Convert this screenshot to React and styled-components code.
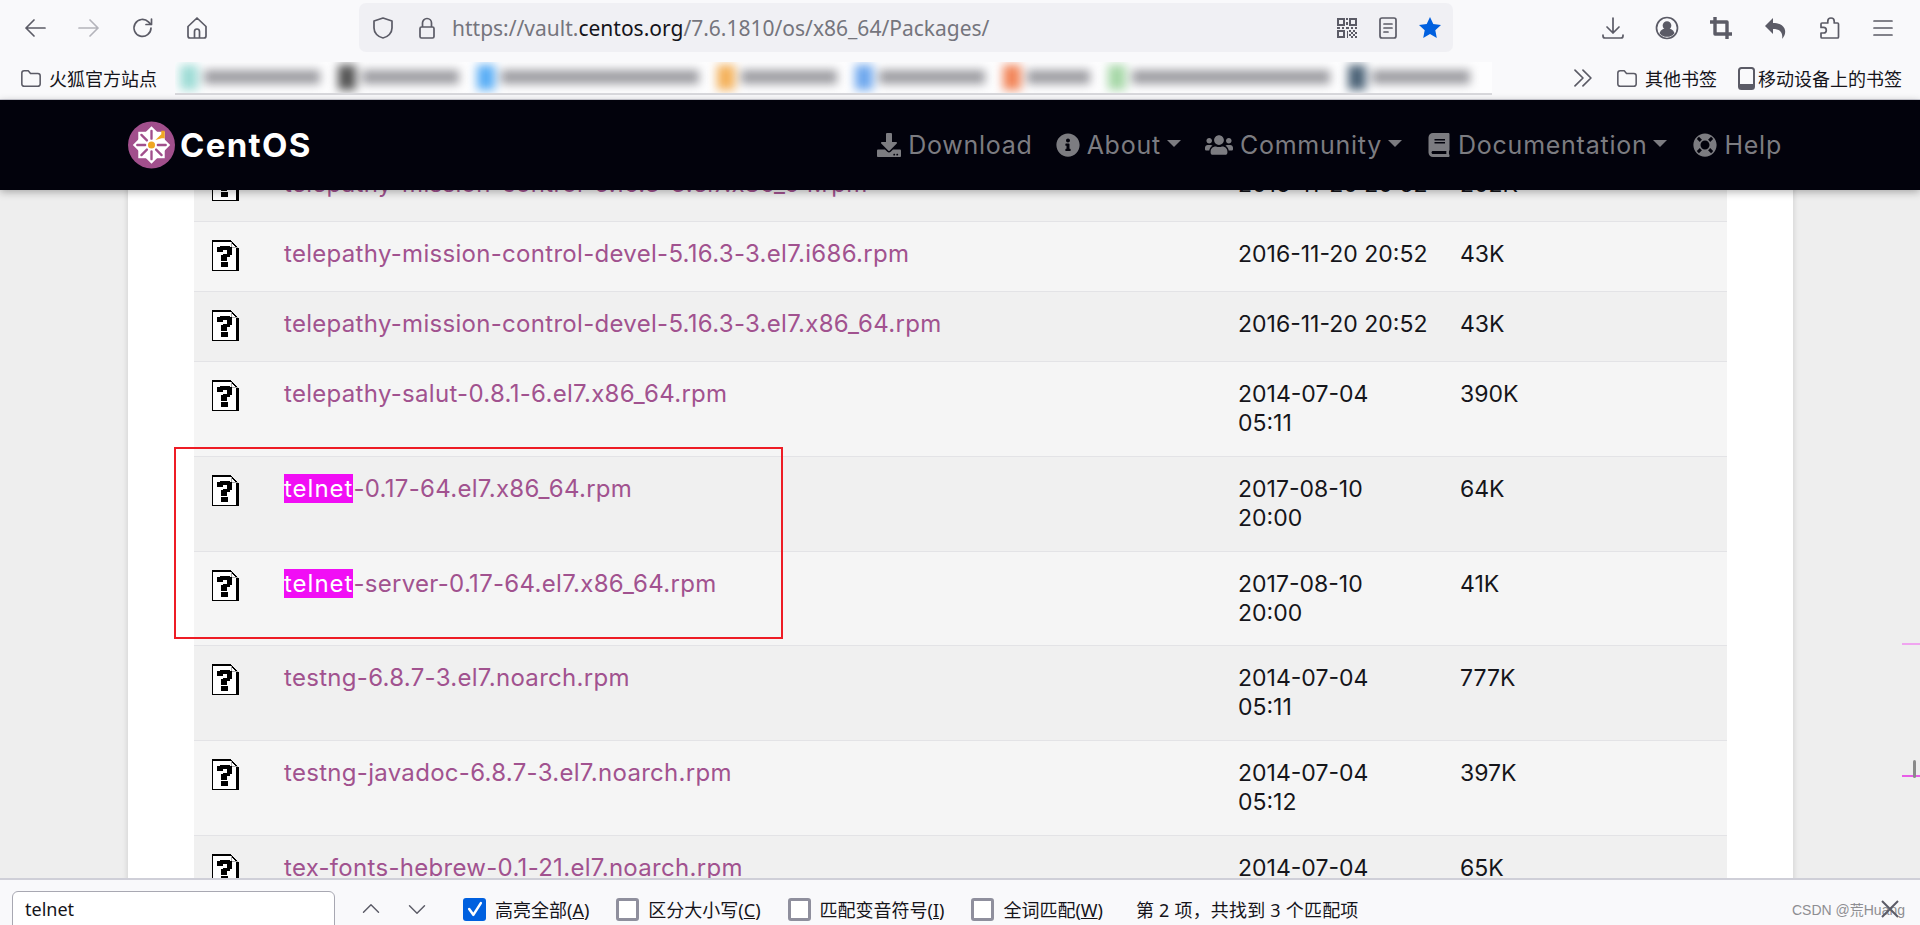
import React from 'react';
import styled, { createGlobalStyle } from 'styled-components';
import { FaDownload, FaInfoCircle, FaUsers, FaBook, FaLifeRing } from 'react-icons/fa';

const GlobalStyle = createGlobalStyle`
	html, body {
		margin: 0;
		padding: 0;
		height: 100%;
		overflow: hidden;
	}
	* {
		box-sizing: border-box;
	}
`;

const UI_FONT = `'Noto Sans', 'Noto Sans CJK SC', sans-serif`;
const SITE_FONT = `Inter, 'Noto Sans', sans-serif`;

const rows = [
	{ name: 'telepathy-mission-control-5.16.3-3.el7.x86_64.rpm', date: '2016-11-20 20:52', size: '202K' },
	{ name: 'telepathy-mission-control-devel-5.16.3-3.el7.i686.rpm', date: '2016-11-20 20:52', size: '43K' },
	{ name: 'telepathy-mission-control-devel-5.16.3-3.el7.x86_64.rpm', date: '2016-11-20 20:52', size: '43K' },
	{ name: 'telepathy-salut-0.8.1-6.el7.x86_64.rpm', date: '2014-07-04\n05:11', size: '390K' },
	{ name: '-0.17-64.el7.x86_64.rpm', mark: 'telnet', date: '2017-08-10\n20:00', size: '64K' },
	{ name: '-server-0.17-64.el7.x86_64.rpm', mark: 'telnet', date: '2017-08-10\n20:00', size: '41K' },
	{ name: 'testng-6.8.7-3.el7.noarch.rpm', date: '2014-07-04\n05:11', size: '777K' },
	{ name: 'testng-javadoc-6.8.7-3.el7.noarch.rpm', date: '2014-07-04\n05:12', size: '397K' },
	{ name: 'tex-fonts-hebrew-0.1-21.el7.noarch.rpm', date: '2014-07-04\n05:11', size: '65K' },
];

const blurred = [
	{ color: '#9fdcd6', width: 116 },
	{ color: '#555', width: 97 },
	{ color: '#5aaef5', width: 198 },
	{ color: '#f4b25c', width: 96 },
	{ color: '#6fa8ee', width: 106 },
	{ color: '#f2865a', width: 63 },
	{ color: '#a7d8a8', width: 198 },
	{ color: '#4d6478', width: 98 },
];

const Page = styled.div`
	height: 100vh;
	display: flex;
	flex-direction: column;
	overflow: hidden;
	background: #eeeeee;
`;

const Toolbar = styled.div`
	height: 55px;
	flex: none;
	display: flex;
	align-items: flex-start;
	padding: 3px 25px 0 23px;
	background: #f9f9fb;
`;

const IconGroup = styled.div`
	height: 49px;
	display: flex;
	align-items: center;
	gap: 30px;
	margin-left: ${({ $auto }) => ($auto ? 'auto' : '0')};
`;

const UrlBar = styled.div`
	width: 1094px;
	height: 49px;
	margin-left: 150px;
	padding: 0 11px 0 12px;
	display: flex;
	align-items: center;
	border-radius: 7px;
	background: #f0f0f4;
`;

const UrlText = styled.div`
	flex: 1;
	margin-left: 13px;
	font: 21px ${UI_FONT};
	color: #75757d;
	white-space: nowrap;
	b {
		font-weight: 400;
		color: #15141a;
	}
`;

const UrlActions = styled.div`
	display: flex;
	align-items: center;
	gap: 18px;
`;

const BookmarkBar = styled.div`
	height: 45px;
	flex: none;
	display: flex;
	align-items: center;
	padding: 2px 18px 0 20px;
	background: #f9f9fb;
	border-bottom: 1px solid #cfcfd8;
`;

const Bookmark = styled.div`
	display: flex;
	align-items: center;
	gap: ${({ $gap }) => $gap || 7}px;
	margin-left: ${({ $left }) => $left || 0}px;
	font: 18px ${UI_FONT};
	color: #15141a;
	white-space: nowrap;
`;

const BlurStrip = styled.div`
	width: 1322px;
	height: 33px;
	margin-left: 18px;
	margin-right: 79px;
	padding: 0 0 0 5px;
	display: flex;
	align-items: center;
	gap: 18px;
	background: #fdfdfe;
	border-bottom: 2px solid #d8d8dc;
	overflow: hidden;
`;

const BlurItem = styled.div`
	flex: none;
	display: flex;
	align-items: center;
	gap: 6px;
	filter: blur(5px);
`;

const BlurIcon = styled.span`
	width: 18px;
	height: 25px;
	background: ${({ $color }) => $color};
`;

const BlurText = styled.span`
	height: 14px;
	background: #9d9da2;
`;

const SiteNav = styled.nav`
	height: 90px;
	flex: none;
	position: relative;
	z-index: 2;
	display: flex;
	align-items: center;
	padding: 0 138px 0 128px;
	background: #02020c;
	box-shadow: 0 2px 8px rgba(0, 0, 0, 0.3);
`;

const Brand = styled.div`
	display: flex;
	align-items: center;
	gap: 5px;
	margin-right: auto;
	font: 700 33px ${SITE_FONT};
	letter-spacing: 1.3px;
	color: #fff;
`;

const NavItem = styled.div`
	display: flex;
	align-items: center;
	gap: 7px;
	margin-left: ${({ $left }) => $left}px;
	font: 25px ${SITE_FONT};
	letter-spacing: 0.75px;
	color: #7c7c81;
	white-space: nowrap;
	svg {
		flex: none;
	}
`;

const Caret = styled.span`
	width: 0;
	height: 0;
	margin-top: -4px;
	margin-left: -1px;
	border-top: 7px solid #7c7c81;
	border-left: 7px solid transparent;
	border-right: 7px solid transparent;
`;

const Main = styled.main`
	flex: 1;
	min-height: 0;
	position: relative;
	overflow: hidden;
`;

const Container = styled.div`
	width: 1665px;
	min-height: 100%;
	margin-left: 128px;
	padding: 0 66px;
	background: #fff;
	box-shadow: 0 0 6px rgba(0, 0, 0, 0.15);
`;

const Table = styled.table`
	width: 1533px;
	margin-top: -39px;
	table-layout: fixed;
	border-collapse: collapse;
	font: 23px/28.9px ${SITE_FONT};
	color: #15151a;
`;

const Row = styled.tr`
	border-top: 1px solid #e3e3e6;
	background: ${({ $odd }) => ($odd ? '#f0f0f0' : '#f5f5f5')};
`;

const Cell = styled.td`
	padding: 18px 0;
	vertical-align: top;
	white-space: pre-line;
`;

const IconCell = styled(Cell)`
	padding-left: 18px;
`;

const FileLink = styled.a`
	font-size: 24px;
	letter-spacing: 0.3px;
	color: #a1528f;
	white-space: nowrap;
`;

const Mark = styled.mark`
	letter-spacing: 1px;
	background: #f10ef5;
	color: #fff;
`;

const RedBox = styled.div`
	position: absolute;
	left: 174px;
	top: 257px;
	width: 609px;
	height: 192px;
	border: 2px solid #ee1c25;
`;

const Tick = styled.div`
	position: absolute;
	right: 0;
	top: ${({ $top }) => $top}px;
	width: 18px;
	height: 2px;
	background: ${({ $color }) => $color};
`;

const Thumb = styled.div`
	position: absolute;
	right: 4px;
	top: 570px;
	width: 3px;
	height: 18px;
	border-radius: 2px;
	background: #8a8a8a;
`;

const FindBar = styled.div`
	height: 47px;
	flex: none;
	position: relative;
	display: flex;
	align-items: flex-start;
	padding: 11px 0 0 12px;
	background: #f9f9fb;
	border-top: 2px solid #cfcfd8;
	font: 18px ${UI_FONT};
	color: #15141a;
	overflow: hidden;
`;

const FindInput = styled.div`
	width: 323px;
	height: 44px;
	padding: 5px 12px;
	border: 1px solid #a8a8b2;
	border-radius: 6px;
	background: #fff;
`;

const Chevrons = styled.div`
	display: flex;
	gap: 26px;
	margin: 8px 36px 0 26px;
`;

const Option = styled.label`
	display: flex;
	align-items: center;
	gap: 9px;
	margin-top: 5px;
	margin-right: ${({ $right }) => $right}px;
	white-space: nowrap;
`;

const Check = styled.span`
	width: 23px;
	height: 23px;
	display: flex;
	align-items: center;
	justify-content: center;
	border-radius: 3px;
	background: ${({ $on }) => ($on ? '#0060df' : '#fff')};
	border: ${({ $on }) => ($on ? 'none' : '3px solid #8f8f9d')};
`;

const Status = styled.div`
	margin-top: 5px;
	margin-left: 33px;
	letter-spacing: 0.2px;
	white-space: nowrap;
`;

const Watermark = styled.div`
	position: absolute;
	right: 15px;
	top: 19px;
	font: 14px 'Liberation Sans', 'Noto Sans CJK SC', sans-serif;
	color: #8e8e92;
`;

const CloseIcon = styled.svg`
	position: absolute;
	right: 21px;
	top: 20px;
`;

const Stroke = ({ size = 24, color = '#5b5b66', children, ...rest }) => (
	<svg width={size} height={size} viewBox='0 0 24 24' fill='none' stroke={color} strokeWidth='1.7' strokeLinecap='round' strokeLinejoin='round' {...rest}>
		{children}
	</svg>
);

const FolderIcon = () => (
	<Stroke size={22}>
		<path d='M2 6.5A2.5 2.5 0 0 1 4.5 4H9l2.5 3h8A2.5 2.5 0 0 1 22 9.5v9a2.5 2.5 0 0 1-2.5 2.5h-15A2.5 2.5 0 0 1 2 18.5z' />
	</Stroke>
);

const QrIcon = () => (
	<svg width='22' height='22' viewBox='0 0 22 22' fill='#5b5b66'>
		<path fillRule='evenodd' d='M1 1h8v8H1zM3 3v4h4V3zM13 1h8v8h-8zM15 3v4h4V3zM1 13h8v8H1zM3 15v4h4v-4z' />
		<path d='M10 1h2v2h-2zM10 5h2v3h-2zM10 10h3v2h-3zM15 10h2v2h-2zM19 10h2v2h-2zM1 10h3v2H1zM6 10h2v2H6zM13 13h2v2h-2zM17 13h2v2h-2zM15 15h2v2h-2zM19 15h2v2h-2zM13 17h2v2h-2zM17 17h2v2h-2zM15 19h2v2h-2zM19 19h2v2h-2zM11 14h1v7h-1z' />
	</svg>
);

const UnknownIcon = () => (
	<svg width='27' height='33' viewBox='0 0 20 24' shapeRendering='crispEdges' style={{ display: 'block' }}>
		<path d='M2 23h18V6h-1v16H2z' fill='#000' />
		<path d='M.5.5h13l5 5v17H.5z' fill='#fff' stroke='#000' />
		<path d='M14 1h1v4h4v1h-5z' fill='#aaa' />
		<path d='M4 9V5h2V4h7v1h2v6h-2v1h-2v3H7v-4h1v-1h3V7H8v2zM7 16h5v4H7z' fill='#000' />
	</svg>
);

const CentosLogo = () => (
	<svg width='47' height='48' viewBox='0 0 48 48'>
		<circle cx='24' cy='24' r='24' fill='#a14f8c' />
		<rect x='10.5' y='10.5' width='27' height='27' fill='#fff' />
		<rect x='10.5' y='10.5' width='27' height='27' fill='#fff' transform='rotate(45 24 24)' />
		<g stroke='#a14f8c' strokeWidth='2.4' strokeLinecap='round'>
			<path d='M24 9.5v8M24 30.5v8M9.5 24h8M30.5 24h8M13.7 13.7l5.6 5.6M28.7 28.7l5.6 5.6M13.7 34.3l5.6-5.6' />
		</g>
		<circle cx='24' cy='24' r='3.6' fill='#efa724' />
		<path d='M28 19l6-6V9.5h3.5V17h-3z' fill='#efa724' />
	</svg>
);

export default function App() {
	return (
		<Page>
			<GlobalStyle />
			<Toolbar>
				<IconGroup>
					<Stroke><path d='M22 12H3M11 4l-8 8 8 8' /></Stroke>
					<Stroke color='#b4b4bb'><path d='M2 12h19M13 4l8 8-8 8' /></Stroke>
					<Stroke><path d='M20 12a8.5 8.5 0 1 1-2.6-6.2L20 8.5M20.5 3v5.5H15' /></Stroke>
					<Stroke><path d='M12 2L3 10.5V20a2 2 0 0 0 2 2h14a2 2 0 0 0 2-2v-9.5zM9.5 22v-6.5a2.5 2.5 0 0 1 5 0V22' /></Stroke>
				</IconGroup>
				<UrlBar>
					<Stroke><path d='M12 2l9 3v7c0 5-4 9-9 10-5-1-9-5-9-10V5z' /></Stroke>
					<Stroke style={{ marginLeft: 20 }}><path d='M7.5 11V7a4.5 4.5 0 0 1 9 0v4M6.5 11h11a1.5 1.5 0 0 1 1.5 1.5v8a1.5 1.5 0 0 1-1.5 1.5h-11A1.5 1.5 0 0 1 5 20.5v-8A1.5 1.5 0 0 1 6.5 11z' /></Stroke>
					<UrlText>https://vault.<b>centos.org</b>/7.6.1810/os/x86_64/Packages/</UrlText>
					<UrlActions>
						<QrIcon />
						<Stroke><path d='M6 2h12a2 2 0 0 1 2 2v16a2 2 0 0 1-2 2H6a2 2 0 0 1-2-2V4a2 2 0 0 1 2-2zM8 8h8M8 12h8M8 16h4' /></Stroke>
						<svg width='24' height='24' viewBox='0 0 24 24' fill='#0060df'>
							<path d='M12 1l3.3 7.1 7.7.9-5.7 5.3 1.5 7.7-6.8-3.900L5.2 22l1.5-7.7L1 9l7.700-.9z' />
						</svg>
					</UrlActions>
				</UrlBar>
				<IconGroup $auto>
					<Stroke><path d='M12 2v15M6 11l6 6 6-6M2 19v1a2 2 0 0 0 2 2h16a2 2 0 0 0 2-2v-1' /></Stroke>
					<Stroke>
						<circle cx='12' cy='12' r='10.5' />
						<circle cx='12' cy='9.5' r='3.5' fill='#5b5b66' />
						<path d='M5.5 17c1-3 4-4 6.5-4s5.5 1 6.5 4c-1.5 2-4 3-6.5 3s-5-1-6.5-3z' fill='#5b5b66' />
					</Stroke>
					<Stroke strokeWidth='3.4' strokeLinecap='butt'><path d='M6 1v17h17M1 6h17v17' /></Stroke>
					<svg width='24' height='24' viewBox='0 0 24 24' fill='#5b5b66'>
						<path d='M10 2L2 10l8 8v-5c4 0 7 1 8.5 4 .8 1.5 1 4 .5 6 3-3 4-7 2.5-10.5C19.5 8.5 15 7 10 7z' />
					</svg>
					<Stroke><path d='M14 2a3.2 3.2 0 0 1 3.2 3.2V7h3.3a1 1 0 0 1 1 1v13a1 1 0 0 1-1 1H5a1 1 0 0 1-1-1v-4h2.500a2.800 2.800 0 0 0 0-5.600H4V8a1 1 0 0 1 1-1h5.800V5.200A3.200 3.200 0 0 1 14 2z' /></Stroke>
					<Stroke><path d='M3 5h18M3 12h18M3 19h18' /></Stroke>
				</IconGroup>
			</Toolbar>
			<BookmarkBar>
				<Bookmark><FolderIcon />火狐官方站点</Bookmark>
				<BlurStrip>
					{blurred.map((item) => (
						<BlurItem key={item.color}>
							<BlurIcon $color={item.color} />
							<BlurText style={{ width: item.width }} />
						</BlurItem>
					))}
				</BlurStrip>
				<Stroke><path d='M4 4l8 8-8 8M12 4l8 8-8 8' /></Stroke>
				<Bookmark $left={21}><FolderIcon />其他书签</Bookmark>
				<Bookmark $left={21} $gap={3}>
					<svg width='17' height='23' viewBox='0 0 17 23'>
						<rect x='1' y='1' width='15' height='21' rx='2.5' fill='none' stroke='#5b5b66' strokeWidth='2' />
						<rect x='1' y='17' width='15' height='5' rx='1' fill='#5b5b66' />
					</svg>
					移动设备上的书签
				</Bookmark>
			</BookmarkBar>
			<SiteNav>
				<Brand><CentosLogo />CentOS</Brand>
				<NavItem><FaDownload size={24} />Download</NavItem>
				<NavItem $left={23}><FaInfoCircle size={24} />About<Caret /></NavItem>
				<NavItem $left={24}><FaUsers size={28} />Community<Caret /></NavItem>
				<NavItem $left={25}><FaBook size={24} />Documentation<Caret /></NavItem>
				<NavItem $left={26}><FaLifeRing size={24} />Help</NavItem>
			</SiteNav>
			<Main>
				<Container>
					<Table>
						<colgroup>
							<col style={{ width: 90 }} />
							<col style={{ width: 954 }} />
							<col style={{ width: 222 }} />
							<col />
						</colgroup>
						<tbody>
							{rows.map((row, i) => (
								<Row key={row.name} $odd={i % 2 === 0}>
									<IconCell><UnknownIcon /></IconCell>
									<Cell>
										<FileLink>
											{row.mark && <Mark>{row.mark}</Mark>}
											{row.name}
										</FileLink>
									</Cell>
									<Cell>{row.date}</Cell>
									<Cell>{row.size}</Cell>
								</Row>
							))}
						</tbody>
					</Table>
				</Container>
				<RedBox />
				<Tick $top={453} $color='#f0a5f0' />
				<Tick $top={585} $color='#e85de8' />
				<Thumb />
			</Main>
			<FindBar>
				<FindInput>telnet</FindInput>
				<Chevrons>
					<Stroke size={20}><path d='M3 16l9-9 9 9' /></Stroke>
					<Stroke size={20}><path d='M3 8l9 9 9-9' /></Stroke>
				</Chevrons>
				<Option $right={27}>
					<Check $on>
						<Stroke size={20} color='#fff' strokeWidth='3'><path d='M5 12l5 7 9-14' /></Stroke>
					</Check>
					<span>高亮全部(<u>A</u>)</span>
				</Option>
				<Option $right={27}>
					<Check />
					<span>区分大小写(<u>C</u>)</span>
				</Option>
				<Option $right={27}>
					<Check />
					<span>匹配变音符号(<u>I</u>)</span>
				</Option>
				<Option $right={0}>
					<Check />
					<span>全词匹配(<u>W</u>)</span>
				</Option>
				<Status>第 2 项，共找到 3 个匹配项</Status>
				<Watermark>CSDN @荒Huang</Watermark>
				<CloseIcon width='18' height='18' viewBox='0 0 18 18' stroke='#5b5b66' strokeWidth='2'>
					<path d='M1 1l16 16M17 1L1 17' />
				</CloseIcon>
			</FindBar>
		</Page>
	);
}
